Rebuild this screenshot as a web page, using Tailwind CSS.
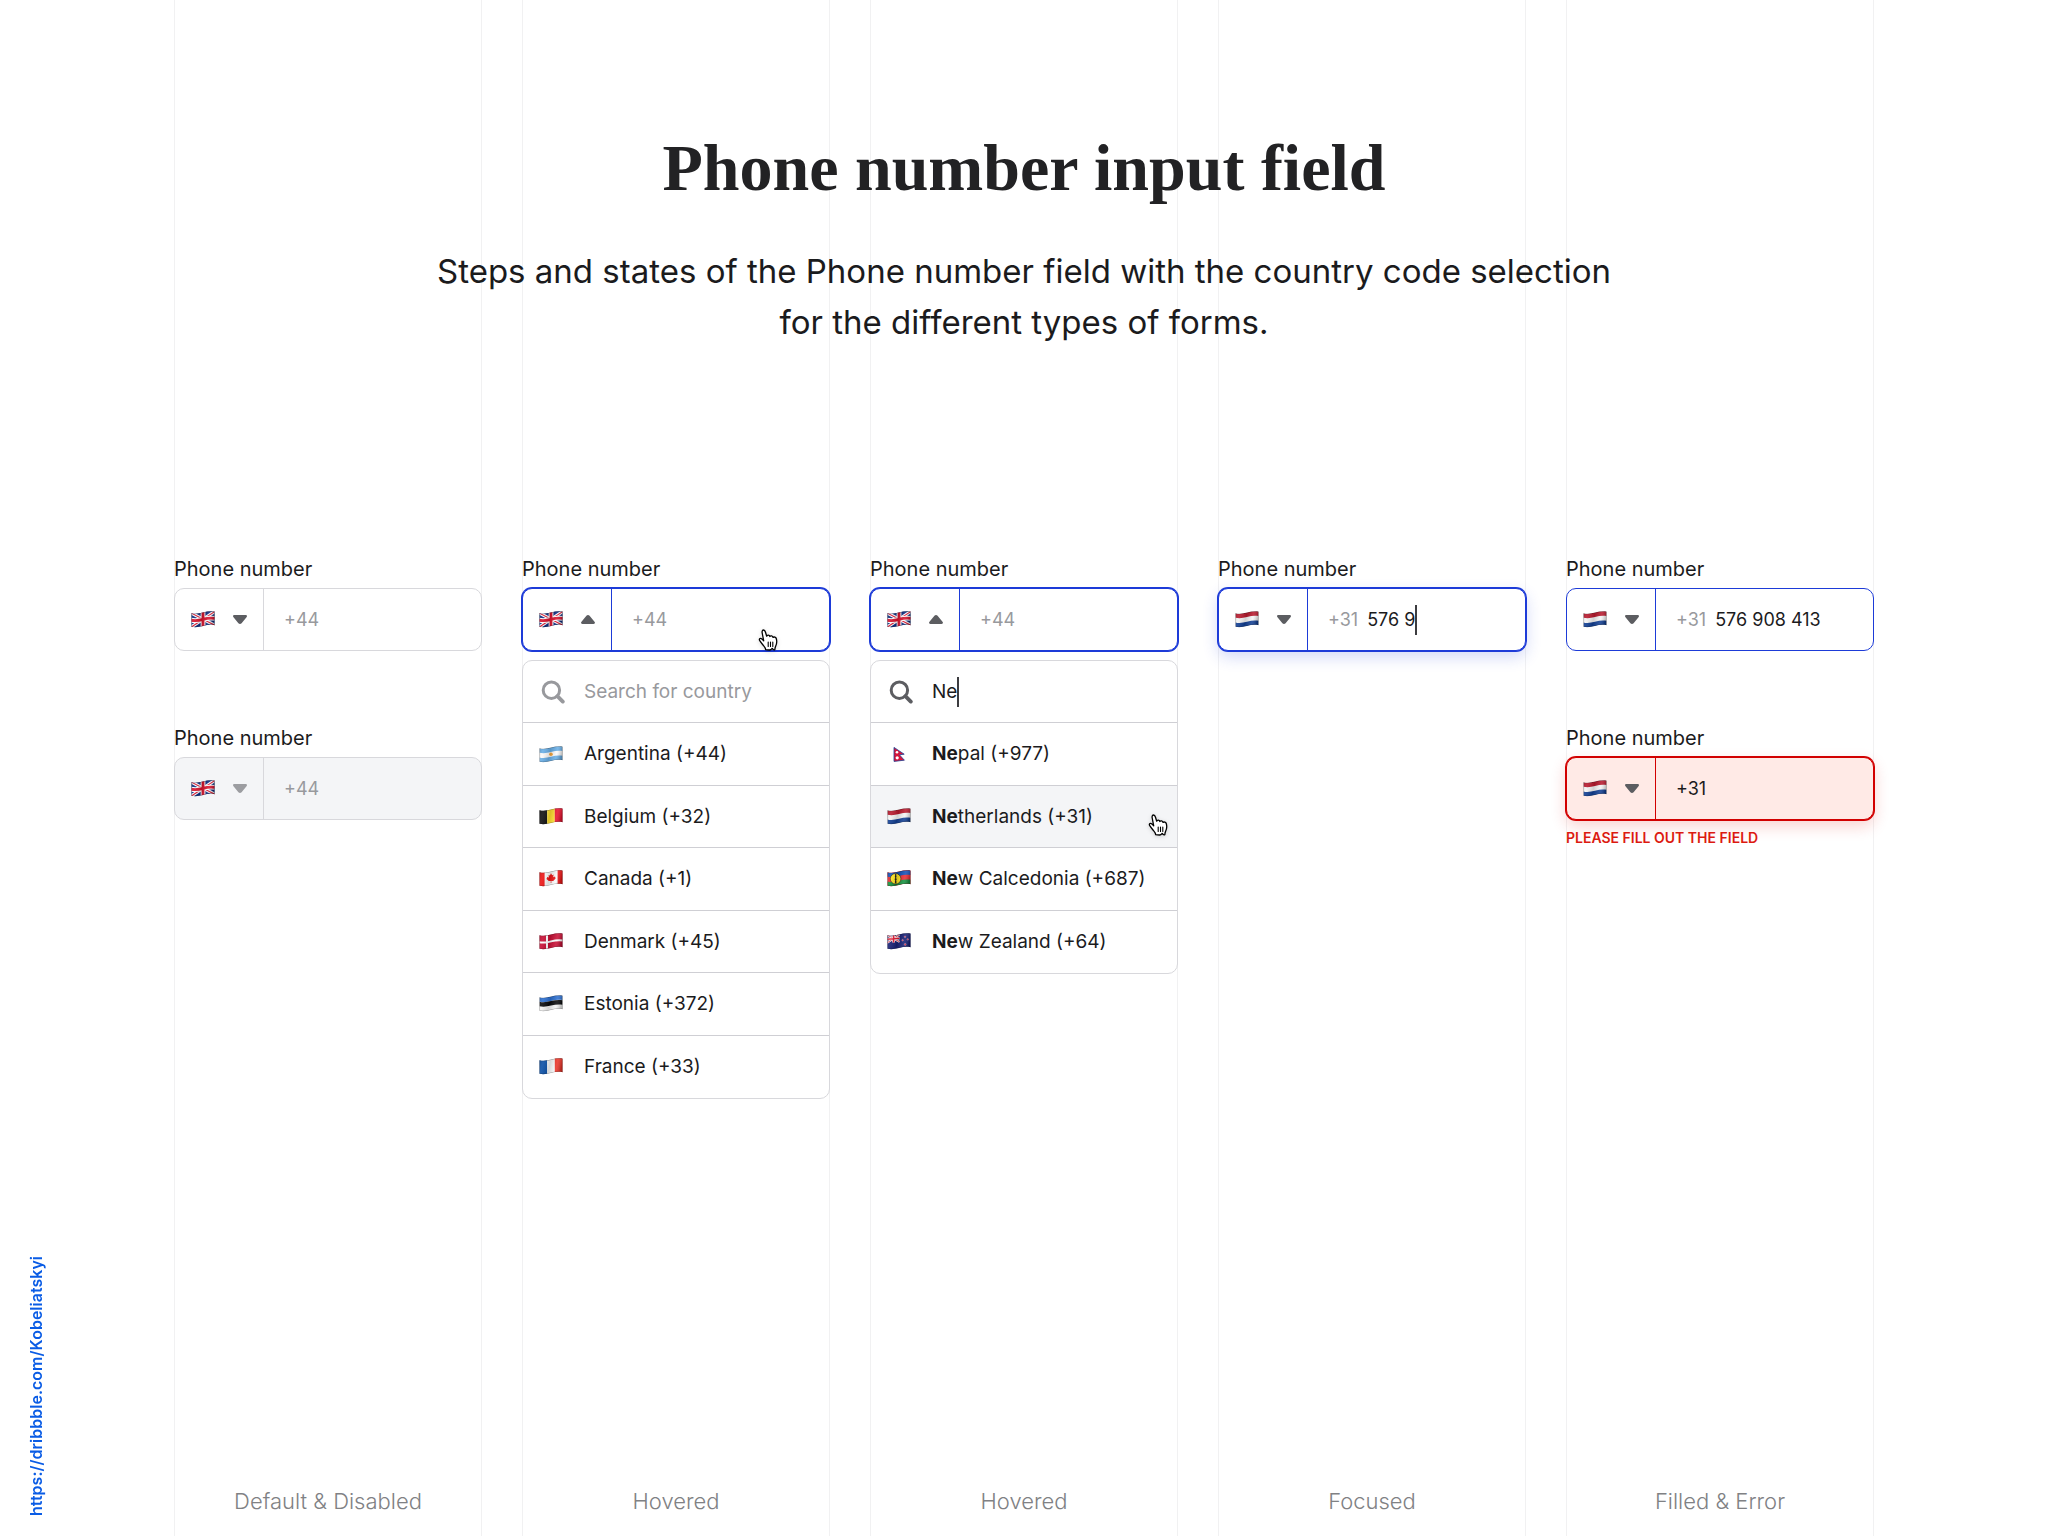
<!DOCTYPE html>
<html lang="en">
<head>
<meta charset="utf-8">
<meta name="viewport" content="width=device-width, initial-scale=1">
<title>Phone number input field</title>
<script src="https://cdn.jsdelivr.net/npm/@tailwindcss/browser@4"></script>
</head>
<body class="bg-white font-['Inter',sans-serif] text-[#1b1b1d]">

<!-- Shared icons and flags -->
<svg class="absolute size-0" aria-hidden="true">
  <defs>
    <path id="outline" d="M.5 2.2C4 3.2 8 2.6 12 1.5C16 .4 20 -.1 23.5 .6V14.2C20 13.4 16 13.9 12 15C8 16.1 4 16.6.5 15.8Z"/>
    <clipPath id="wave"><use href="#outline"/></clipPath>
    <linearGradient id="fold" x1="0" x2="1" y1="0" y2=".15">
      <stop offset="0" stop-color="#000" stop-opacity=".22"/><stop offset=".2" stop-color="#fff" stop-opacity=".1"/><stop offset=".5" stop-color="#000" stop-opacity=".14"/><stop offset=".78" stop-color="#fff" stop-opacity=".12"/><stop offset="1" stop-color="#000" stop-opacity=".25"/>
    </linearGradient>
    <g id="shade"><path fill="url(#fold)" d="M0 0H24V17H0Z"/><use href="#outline" fill="none" stroke="#000" stroke-opacity=".35" stroke-width="1"/></g>
    <path id="stripe" d="M.5 2.2C4 3.2 8 2.6 12 1.5C16 .4 20 -.1 23.5 .6V5.1C20 4.4 16 4.9 12 6C8 7.1 4 7.6.5 6.7Z"/>
    <symbol id="caret" viewBox="0 0 14 9"><path d="M1.4 0H12.6C13.9 0 14.4 1.3 13.5 2.2L8.6 8.2C7.7 9.2 6.3 9.2 5.4 8.2L.5 2.2C-.4 1.3.1 0 1.4 0Z"/></symbol>
    <symbol id="search" viewBox="0 0 24 24"><circle cx="10.4" cy="10.2" r="8.2" fill="none" stroke="currentColor" stroke-width="3"/><path d="M16.4 16.2L21.8 21.6" stroke="currentColor" stroke-width="3.8" stroke-linecap="round"/></symbol>
    <symbol id="hand" viewBox="0 0 20 23">
      <path d="M7.6 20.6C7.6 18.6 6.2 17.4 5 16C3.8 14.6 2.6 13 1.6 11.4C.8 9.8 2.4 8.6 3.8 9.9L5.7 11.8L4.2 4C3.8 1.9 4.6 1 5.5 1C6.6 1 7.1 1.8 7.5 3.2L8.7 7.2C9.2 5.7 11.4 5.8 11.9 7.5C12.6 6.4 14.6 6.8 15 8.4C16 7.6 18 8.1 18.4 10C19.1 13 18.6 15.6 17.5 17.6C17 18.6 16.9 19.4 16.9 20.6C16 21 15 20.8 14.2 19.4C13.4 20.4 12.6 21 11.7 21C10.2 21 9 21 7.6 20.6Z" fill="#fff" stroke="#000" stroke-width="1.3" stroke-linejoin="round"/>
      <path d="M10.2 13V17.4M12.5 13V17.4M14.8 13V17.4" stroke="#000" stroke-width="1.1" stroke-linecap="round"/>
    </symbol>

    <symbol id="gb" viewBox="0 0 24 17"><g clip-path="url(#wave)"><path fill="#0a2a80" d="M0 0H24V17H0Z"/><path d="M0 2L24 14.4M0 16.2L24 .4" stroke="#fff" stroke-width="3.2"/><path d="M0 2L24 14.4M0 16.2L24 .4" stroke="#d8122d" stroke-width="1.1"/><path d="M12 0V17M0 9.2C4 10 8 9.6 12 8.4C16 7.2 20 6.8 24 7.4" fill="none" stroke="#fff" stroke-width="4.8"/><path d="M12 0V17M0 9.2C4 10 8 9.6 12 8.4C16 7.2 20 6.8 24 7.4" fill="none" stroke="#d8122d" stroke-width="2.8"/><use href="#shade"/></g></symbol>
    <symbol id="nl" viewBox="0 0 24 17"><g clip-path="url(#wave)"><path fill="#f4f4f4" d="M0 0H24V17H0Z"/><use href="#stripe" fill="#b81a2e"/><use href="#stripe" y="9.2" fill="#123f93"/><use href="#shade"/></g></symbol>
    <symbol id="ee" viewBox="0 0 24 17"><g clip-path="url(#wave)"><path fill="#f4f4f4" d="M0 0H24V17H0Z"/><use href="#stripe" fill="#2c6fd0"/><use href="#stripe" y="4.6" fill="#08090b"/><use href="#shade"/></g></symbol>
    <symbol id="ar" viewBox="0 0 24 17"><g clip-path="url(#wave)"><path fill="#fafafa" d="M0 0H24V17H0Z"/><use href="#stripe" fill="#68aee6"/><use href="#stripe" y="9.2" fill="#68aee6"/><circle cx="12" cy="8.3" r="1.8" fill="#f2a33a"/><use href="#shade"/></g></symbol>
    <symbol id="be" viewBox="0 0 24 17"><g clip-path="url(#wave)"><path fill="#111" d="M0 0H8.2V17H0Z"/><path fill="#ffdf2e" d="M8.2 0H15.8V17H8.2Z"/><path fill="#e8112d" d="M15.8 0H24V17H15.8Z"/><use href="#shade"/></g></symbol>
    <symbol id="fr" viewBox="0 0 24 17"><g clip-path="url(#wave)"><path fill="#0b4fa6" d="M0 0H8.2V17H0Z"/><path fill="#fafafa" d="M8.2 0H15.8V17H8.2Z"/><path fill="#ea3226" d="M15.8 0H24V17H15.8Z"/><use href="#shade"/></g></symbol>
    <symbol id="ca" viewBox="0 0 24 17"><g clip-path="url(#wave)"><path fill="#fafafa" d="M0 0H24V17H0Z"/><path fill="#ee1414" d="M0 0H5.6V17H0ZM18.6 0H24V17H18.6Z"/><path fill="#f01414" d="M12 3.2L13.2 5.2L14.6 4.6L14.2 7.2L16 6.4L16.6 8.4L14.2 10.9H12.3L12.4 13H11.7L11.8 10.9L9.8 11.1L7.5 9L8.2 7L9.9 7.6L9.6 5.1L10.9 5.5Z"/><use href="#shade"/></g></symbol>
    <symbol id="dk" viewBox="0 0 24 17"><g clip-path="url(#wave)"><path fill="#c80f35" d="M0 0H24V17H0Z"/><path d="M8 0V17M0 9.2C4 10 8 9.6 12 8.4C16 7.2 20 6.8 24 7.4" fill="none" stroke="#fff" stroke-width="2"/><use href="#shade"/></g></symbol>
    <symbol id="np" viewBox="0 0 24 17"><path d="M7 1.4L17.2 8.2L12.4 8.8L17.4 14.2L7 15.4Z" fill="#d8143a" stroke="#1c3f94" stroke-width=".8" stroke-linejoin="round"/><circle cx="10" cy="6.2" r="1.3" fill="#fff"/><circle cx="10.2" cy="11.8" r="1.6" fill="#fff"/></symbol>
    <symbol id="nc" viewBox="0 0 24 17"><g clip-path="url(#wave)"><path fill="#ea2b33" d="M0 0H24V17H0Z"/><use href="#stripe" fill="#1451b8"/><use href="#stripe" y="9.2" fill="#14923f"/><circle cx="8.6" cy="8.8" r="5.3" fill="#fde421" stroke="#151515" stroke-width=".6"/><path d="M8.7 4V13.6M7.9 6.2H9.5M7.7 9.3H9.7M7.9 12H9.5" stroke="#151515" stroke-width="1.1"/><use href="#shade"/></g></symbol>
    <symbol id="nz" viewBox="0 0 24 17"><g clip-path="url(#wave)"><path fill="#171f74" d="M0 0H24V17H0Z"/><path d="M0 2L12.5 8.8M0 10L12.5 1.4" stroke="#fff" stroke-width="2"/><path d="M0 2L12.5 8.8M0 10L12.5 1.4" stroke="#e0142f" stroke-width=".8"/><path d="M6.6 1V9.6M0 6.2L12.5 5.2" stroke="#fff" stroke-width="2.8"/><path d="M6.6 1V9.6M0 6.2L12.5 5.2" stroke="#e0142f" stroke-width="1.6"/><g fill="#e0142f" stroke="#fff" stroke-width=".3"><circle cx="18" cy="3.8" r=".8"/><circle cx="15.6" cy="7.2" r=".8"/><circle cx="20.8" cy="6.4" r=".8"/><circle cx="18.2" cy="11.4" r="1"/></g><use href="#shade"/></g></symbol>
  </defs>
</svg>

<div class="grid min-h-screen grid-cols-[1fr_minmax(0,1700px)_1fr]">
  <aside class="self-end pb-5 pl-6">
    <a href="https://dribbble.com/Kobeliatskyi" class="block rotate-180 text-base leading-6 font-semibold text-[#0a5ce5] [writing-mode:vertical-rl]">https://dribbble.com/Kobeliatskyi</a>
  </aside>

  <div class="relative isolate flex flex-col">
    <!-- Column guides -->
    <div class="absolute inset-0 -z-10 grid grid-cols-5 gap-10" aria-hidden="true">
      <div class="border-x border-[#f1f1f2]"></div>
      <div class="border-x border-[#f1f1f2]"></div>
      <div class="border-x border-[#f1f1f2]"></div>
      <div class="border-x border-[#f1f1f2]"></div>
      <div class="border-x border-[#f1f1f2]"></div>
    </div>

    <header class="h-[554px] pt-32 text-center">
      <h1 class="font-['Liberation_Serif',serif] text-[66px] leading-20 font-bold text-[#222224]">Phone number input field</h1>
      <p class="mt-[38px] text-[33px] leading-[51px]">Steps and states of the Phone number field with the country code selection<br>for the different types of forms.</p>
    </header>

    <main class="grid grid-cols-5 items-start gap-10 text-lg">
      <!-- Default & Disabled -->
      <section class="flex flex-col gap-[72px]">
        <div>
          <label for="p1" class="mb-1 block text-xl leading-[30px]">Phone number</label>
          <div class="flex h-[63px] overflow-hidden rounded-[10px] border border-[#d8d8dc] bg-white">
            <button type="button" aria-label="Country: United Kingdom" class="flex w-[89px] shrink-0 items-center gap-[18px] border-r border-[#d8d8dc] pl-4"><svg class="h-[17px] w-6"><use href="#gb"/></svg><svg class="h-[9px] w-[14px] fill-[#5c5d61]"><use href="#caret"/></svg></button>
            <input id="p1" type="tel" placeholder="+44" class="min-w-0 flex-1 pl-5 outline-none placeholder:text-[#98999d]">
          </div>
        </div>
        <div>
          <label for="p2" class="mb-1 block text-xl leading-[30px]">Phone number</label>
          <div class="flex h-[63px] overflow-hidden rounded-[10px] border border-[#d8d8dc] bg-[#f4f5f7]">
            <button type="button" disabled aria-label="Country: United Kingdom" class="flex w-[89px] shrink-0 items-center gap-[18px] border-r border-[#d8d8dc] pl-4"><svg class="h-[17px] w-6"><use href="#gb"/></svg><svg class="h-[9px] w-[14px] fill-[#9c9da1]"><use href="#caret"/></svg></button>
            <input id="p2" type="tel" disabled placeholder="+44" class="min-w-0 flex-1 pl-5 outline-none placeholder:text-[#98999d]">
          </div>
        </div>
      </section>

      <!-- Hovered, list open -->
      <section>
        <label for="p3" class="mb-1 block text-xl leading-[30px]">Phone number</label>
        <div class="relative flex h-[63px] rounded-[10px] border border-[#1d3bd8] bg-white ring-1 ring-[#1d3bd8]">
          <button type="button" aria-expanded="true" aria-label="Country: United Kingdom" class="flex w-[89px] shrink-0 items-center gap-[18px] border-r border-[#1d3bd8] pl-4"><svg class="h-[17px] w-6"><use href="#gb"/></svg><svg class="h-[9px] w-[14px] rotate-180 fill-[#5c5d61]"><use href="#caret"/></svg></button>
          <input id="p3" type="tel" placeholder="+44" class="min-w-0 flex-1 rounded-r-[10px] pl-5 outline-none placeholder:text-[#98999d]">
          <svg class="absolute right-[51px] -bottom-[2px] h-[23px] w-5 drop-shadow-sm" aria-hidden="true"><use href="#hand"/></svg>
        </div>
        <div class="mt-[9px] grid h-[439px] auto-rows-fr grid-cols-1 divide-y divide-[#cfcfd4] rounded-[10px] border border-[#d8d8dc] bg-white text-[19px]">
          <div class="flex items-center gap-[19px] pl-[18px]"><svg class="size-6 shrink-0 text-[#98999d]"><use href="#search"/></svg><input type="search" aria-label="Search for country" placeholder="Search for country" class="min-w-0 flex-1 outline-none placeholder:text-[#98999d]"></div>
          <button type="button" class="flex items-center gap-[21px] pl-4"><svg class="h-[17px] w-6"><use href="#ar"/></svg>Argentina (+44)</button>
          <button type="button" class="flex items-center gap-[21px] pl-4"><svg class="h-[17px] w-6"><use href="#be"/></svg>Belgium (+32)</button>
          <button type="button" class="flex items-center gap-[21px] pl-4"><svg class="h-[17px] w-6"><use href="#ca"/></svg>Canada (+1)</button>
          <button type="button" class="flex items-center gap-[21px] pl-4"><svg class="h-[17px] w-6"><use href="#dk"/></svg>Denmark (+45)</button>
          <button type="button" class="flex items-center gap-[21px] pl-4"><svg class="h-[17px] w-6"><use href="#ee"/></svg>Estonia (+372)</button>
          <button type="button" class="flex items-center gap-[21px] pl-4"><svg class="h-[17px] w-6"><use href="#fr"/></svg>France (+33)</button>
        </div>
      </section>

      <!-- Hovered, filtered list -->
      <section>
        <label for="p4" class="mb-1 block text-xl leading-[30px]">Phone number</label>
        <div class="flex h-[63px] rounded-[10px] border border-[#1d3bd8] bg-white ring-1 ring-[#1d3bd8]">
          <button type="button" aria-expanded="true" aria-label="Country: United Kingdom" class="flex w-[89px] shrink-0 items-center gap-[18px] border-r border-[#1d3bd8] pl-4"><svg class="h-[17px] w-6"><use href="#gb"/></svg><svg class="h-[9px] w-[14px] rotate-180 fill-[#5c5d61]"><use href="#caret"/></svg></button>
          <input id="p4" type="tel" placeholder="+44" class="min-w-0 flex-1 rounded-r-[10px] pl-5 outline-none placeholder:text-[#98999d]">
        </div>
        <div class="mt-[9px] grid h-[314px] auto-rows-fr grid-cols-1 divide-y divide-[#cfcfd4] rounded-[10px] border border-[#d8d8dc] bg-white text-[19px]">
          <div class="flex items-center pl-[18px]"><svg class="mr-[19px] size-6 shrink-0 text-[#5c5d61]"><use href="#search"/></svg><input type="text" aria-label="Search for country" value="Ne" class="field-sizing-content outline-none"><span class="h-[30px] w-[2px] bg-[#3c3c40]"></span></div>
          <button type="button" class="flex items-center gap-[21px] pl-4"><svg class="h-[17px] w-6"><use href="#np"/></svg><span><b>Ne</b>pal (+977)</span></button>
          <button type="button" class="relative flex items-center gap-[21px] bg-[#f4f5f7] pl-4"><svg class="h-[17px] w-6"><use href="#nl"/></svg><span><b>Ne</b>therlands (+31)</span><svg class="absolute right-[9px] bottom-[10px] h-[23px] w-5 drop-shadow-sm" aria-hidden="true"><use href="#hand"/></svg></button>
          <button type="button" class="flex items-center gap-[21px] pl-4"><svg class="h-[17px] w-6"><use href="#nc"/></svg><span><b>Ne</b>w Calcedonia (+687)</span></button>
          <button type="button" class="flex items-center gap-[21px] pl-4"><svg class="h-[17px] w-6"><use href="#nz"/></svg><span><b>Ne</b>w Zealand (+64)</span></button>
        </div>
      </section>

      <!-- Focused -->
      <section>
        <label for="p5" class="mb-1 block text-xl leading-[30px]">Phone number</label>
        <div class="flex h-[63px] items-center rounded-[10px] border border-[#1d3bd8] bg-white shadow-[0_6px_16px_#1d3bd833] ring-1 ring-[#1d3bd8]">
          <button type="button" aria-label="Country: Netherlands" class="flex w-[89px] shrink-0 items-center gap-[18px] self-stretch border-r border-[#1d3bd8] pl-4"><svg class="h-[17px] w-6"><use href="#nl"/></svg><svg class="h-[9px] w-[14px] fill-[#5c5d61]"><use href="#caret"/></svg></button>
          <span class="pr-[9px] pl-5 text-[#98999d]">+31</span>
          <input id="p5" type="tel" value="576 9" class="field-sizing-content outline-none"><span class="h-[30px] w-[2px] bg-[#3c3c40]"></span>
        </div>
      </section>

      <!-- Filled & Error -->
      <section class="flex flex-col gap-[72px]">
        <div>
          <label for="p6" class="mb-1 block text-xl leading-[30px]">Phone number</label>
          <div class="flex h-[63px] items-center rounded-[10px] border border-[#1d3bd8] bg-white">
            <button type="button" aria-label="Country: Netherlands" class="flex w-[89px] shrink-0 items-center gap-[18px] self-stretch border-r border-[#1d3bd8] pl-4"><svg class="h-[17px] w-6"><use href="#nl"/></svg><svg class="h-[9px] w-[14px] fill-[#5c5d61]"><use href="#caret"/></svg></button>
            <span class="pr-[9px] pl-5 text-[#98999d]">+31</span>
            <input id="p6" type="tel" value="576 908 413" class="min-w-0 flex-1 outline-none">
          </div>
        </div>
        <div>
          <label for="p7" class="mb-1 block text-xl leading-[30px]">Phone number</label>
          <div class="flex h-[63px] rounded-[10px] border border-[#d20000] bg-[#ffeae6] shadow-[0_6px_16px_#e01b1033] ring-1 ring-[#d20000]">
            <button type="button" aria-label="Country: Netherlands" class="flex w-[89px] shrink-0 items-center gap-[18px] border-r border-[#d20000] pl-4"><svg class="h-[17px] w-6"><use href="#nl"/></svg><svg class="h-[9px] w-[14px] fill-[#5c5d61]"><use href="#caret"/></svg></button>
            <input id="p7" type="tel" value="+31" aria-invalid="true" aria-describedby="e7" class="min-w-0 flex-1 pl-5 outline-none">
          </div>
          <p id="e7" class="mt-2 text-sm leading-5 font-semibold text-[#dc1a10]">PLEASE FILL OUT THE FIELD</p>
        </div>
      </section>
    </main>

    <footer class="mt-auto grid grid-cols-5 gap-10 pb-5 text-center text-[22px] leading-[30px] font-light text-[#808184]">
      <p>Default &amp; Disabled</p>
      <p>Hovered</p>
      <p>Hovered</p>
      <p>Focused</p>
      <p>Filled &amp; Error</p>
    </footer>
  </div>
</div>
</body>
</html>
